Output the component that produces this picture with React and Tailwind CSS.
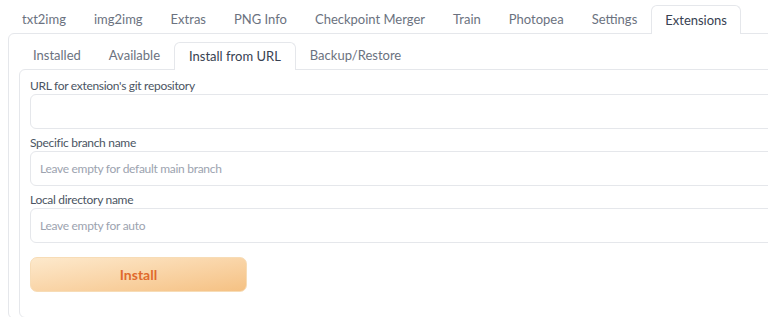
export default function App() {
  const topTabs = ["txt2img", "img2img", "Extras", "PNG Info", "Checkpoint Merger", "Train", "Photopea", "Settings", "Extensions"];
  const subTabs = ["Installed", "Available", "Install from URL", "Backup/Restore"];
  return (
    <div className="w-[768px] h-[317px] overflow-hidden bg-white" style={{ fontFamily: '"Lato", "Liberation Sans", sans-serif' }}>
      <div className="w-[900px] pl-[8px] pt-[5px]">
        <div className="flex h-[28px] text-[13px]">
          {topTabs.map((t) =>
            t === "Extensions" ? (
              <div key={t} className="relative z-10 flex items-center pt-[2px] px-[13px] h-[29px] bg-white border border-b-0 border-[#e5e7eb] rounded-t-[6px] text-[#374151]">{t}</div>
            ) : (
              <div key={t} className="flex items-center pt-[2px] px-[14px] text-[#6b7280]">{t}</div>
            )
          )}
        </div>
        <div className="border border-[#e5e7eb] rounded-[6px] px-[10px] pt-[8px] pb-0">
          <div className="flex h-[27px] text-[13px]">
            {subTabs.map((t) =>
              t === "Install from URL" ? (
                <div key={t} className="relative z-10 flex items-center pt-[1px] px-[14px] h-[28px] bg-white border border-b-0 border-[#e5e7eb] rounded-t-[6px] text-[#374151]">{t}</div>
              ) : (
                <div key={t} className="flex items-center pt-[1px] px-[14px] text-[#6b7280]">{t}</div>
              )
            )}
          </div>
          <div className="border border-[#e5e7eb] rounded-[6px] px-[10px] pt-[8px] pb-[25px]">
            <div className="text-[12px] tracking-[-0.3px] leading-[16px] text-[#4b5563]">URL for extension's git repository</div>
            <div className="h-[35px] border border-[#e5e7eb] rounded-[6px] bg-white"></div>
            <div className="mt-[6px] text-[12px] tracking-[-0.3px] leading-[16px] text-[#4b5563]">Specific branch name</div>
            <div className="h-[35px] border border-[#e5e7eb] rounded-[6px] bg-white flex items-center px-[9px] text-[12px] tracking-[-0.3px] text-[#9ca3af]">Leave empty for default main branch</div>
            <div className="mt-[6px] text-[12px] tracking-[-0.3px] leading-[16px] text-[#4b5563]">Local directory name</div>
            <div className="h-[35px] border border-[#e5e7eb] rounded-[6px] bg-white flex items-center px-[9px] text-[12px] tracking-[-0.3px] text-[#9ca3af]">Leave empty for auto</div>
            <div className="mt-[14px] w-[217px] h-[35px] rounded-[7px] border border-[#f7dcb6] bg-gradient-to-br from-[#fde9cc] to-[#f5c183] flex items-center justify-center text-[14px] font-bold text-[#e06a2c]">Install</div>
          </div>
        </div>
      </div>
    </div>
  );
}
